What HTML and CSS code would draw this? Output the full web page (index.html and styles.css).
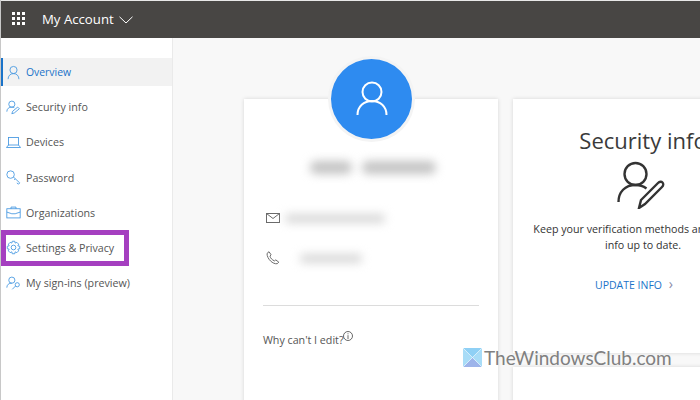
FILE: index.html
```html
<!DOCTYPE html>
<html lang="en">
<head>
  <meta charset="UTF-8">
  <title>My Account</title>
  <link rel="stylesheet" href="styles.css">
</head>
<body>

  <header class="topbar">
    <svg class="waffle" width="13" height="13" viewBox="0 0 13 13" fill="#fff">
      <rect x="0" y="0" width="3" height="3"/><rect x="5" y="0" width="3" height="3"/><rect x="10" y="0" width="3" height="3"/>
      <rect x="0" y="5" width="3" height="3"/><rect x="5" y="5" width="3" height="3"/><rect x="10" y="5" width="3" height="3"/>
      <rect x="0" y="10" width="3" height="3"/><rect x="5" y="10" width="3" height="3"/><rect x="10" y="10" width="3" height="3"/>
    </svg>
    <span class="brand">My Account</span>
    <svg class="chevron" width="14" height="8" viewBox="0 0 14 8" fill="none" stroke="#fff" stroke-width="1"><path d="M.5.8 7 7 13.500.8"/></svg>
  </header>

  <div class="layout">
    <nav class="sidebar">
      <a class="nav-item active">
        <svg class="nav-icon" viewBox="0 0 16 18"><circle cx="8" cy="6" r="4.300"/><path d="M1.500 17c0-4 2.700-6.700 6.500-6.700s6.500 2.700 6.500 6.700"/></svg>
        Overview
      </a>
      <a class="nav-item">
        <svg class="nav-icon" viewBox="0 0 18 18"><circle cx="7" cy="5" r="3.700"/><path d="M1 14c0-3.500 2.400-5.500 6-5.500 1 0 2 .2 3 .7"/><path d="m7 16.500 1-3 6-5 2 2-6 5z"/></svg>
        Security info
      </a>
      <a class="nav-item">
        <svg class="nav-icon" viewBox="0 0 18 16"><rect x="3" y="2" width="12" height="9"/><path d="M.5 14h17M3 11l-2.500 3M15 11l2.500 3"/></svg>
        Devices
      </a>
      <a class="nav-item">
        <svg class="nav-icon" viewBox="0 0 18 18"><circle cx="5.500" cy="5.500" r="4.500"/><path d="m9 8.500 7.500 7-1.500 1.500-2-1.500M11 10.500l-1 1.500"/></svg>
        Password
      </a>
      <a class="nav-item">
        <svg class="nav-icon" viewBox="0 0 18 16"><rect x="1" y="3.500" width="16" height="11"/><path d="M6 3.500V1.500h6v2M1 7.500l6 2h4l6-2"/></svg>
        Organizations
      </a>
      <a class="nav-item highlighted">
        <svg class="nav-icon" viewBox="0 0 18 18"><circle cx="9" cy="9" r="2.800"/><path d="m7.500 1.500h3l.5 2.200 2-.9 2.200 2.200-1 2 2.300.5v3l-2.300.5 1 2-2.200 2.200-2-1-.5 2.300h-3L7 14.200l-2 1-2.200-2.200 1-2-2.300-.5v-3l2.300-.5-1-2L5 2.800l2 .9z"/></svg>
        Settings &amp; Privacy
      </a>
      <a class="nav-item">
        <svg class="nav-icon" viewBox="0 0 18 18"><circle cx="7" cy="5" r="3.700"/><path d="M1 14c0-3.500 2.400-5.500 6-5.500"/><circle cx="13.500" cy="10.500" r="2.500"/><path d="m11.500 12-4 4"/></svg>
        My sign-ins (preview)
      </a>
    </nav>

    <main class="content">
      <section class="card profile-card">
        <div class="avatar">
          <svg width="32" height="36" viewBox="0 0 32 36" fill="none" stroke="#fff" stroke-width="2">
            <circle cx="16" cy="11" r="9.500"/>
            <path d="M1.500 34c0-8.500 6.300-14 14.500-14s14.500 5.500 14.500 14"/>
          </svg>
        </div>
        <div class="blur-name">
          <div class="blob first"></div>
          <div class="blob last"></div>
        </div>
        <div class="contact-row">
          <svg width="14" height="10" viewBox="0 0 14 10" fill="none" stroke="#6a6a6a"><rect x=".5" y=".5" width="13" height="9"/><path d="m.5.500 6.500 5 6.500-5"/></svg>
          <div class="blur-line mail"></div>
        </div>
        <div class="contact-row phone-row">
          <svg width="14" height="14" viewBox="0 0 14 14" fill="none" stroke="#6a6a6a"><path d="M1 2.500 3 .7l2 3-1 1.500c.5 2 2 3.700 4.500 4.700l1.300-1 3 2.300-1.600 1.500C7 13.500 1 8 1 2.500z"/></svg>
          <div class="blur-line phone"></div>
        </div>
        <hr class="divider">
        <div class="why-edit">
          Why can't I edit?
          <svg class="info-icon" width="10" height="10" viewBox="0 0 10 10" fill="none" stroke="#444" stroke-width=".8"><circle cx="5" cy="5" r="4.500"/><path d="M5 4.200V8M5 2.300v1"/></svg>
        </div>
      </section>

      <div class="right-column">
        <section class="card security-card">
          <h2>Security info</h2>
          <svg class="security-icon" width="48" height="48" viewBox="0 0 48 48" fill="none" stroke="#333" stroke-width="2.400">
            <circle cx="18.500" cy="13" r="11"/>
            <path d="M1.500 41c0-10 6.500-17 17-17 4.500 0 8 1.300 11 3.500"/>
            <path d="m22 47 2-8 17-17c1.500-1.500 3.500-1.500 4.500-.5s1 3-.5 4.500L28 43z"/>
          </svg>
          <p>Keep your verification methods and security<br>info up to date.</p>
          <a class="update-link">UPDATE INFO <span class="link-arrow">&#8250;</span></a>
        </section>
        <section class="card next-card"></section>
      </div>
    </main>
  </div>

  <div class="watermark">
    <svg width="19" height="19" viewBox="0 0 19 19">
      <rect width="19" height="19" fill="#8fd0f5"/>
      <path d="M0 19 9.500 9.500 19 19z" fill="#9db4ea"/>
      <path d="M0 0 9.500 9.500 0 19zM19 0 9.500 9.500 19 19z" fill="#a8dcf7"/>
      <path d="M0 0 19 19M19 0 0 19" stroke="#e6f4fc" stroke-width=".8"/>
    </svg>
    <span>TheWindowsClub.com</span>
  </div>

</body>
</html>
```

FILE: styles.css
```css
:root {
  --blue: #1a73c9;
  --text: #444;
}

* {
  box-sizing: border-box;
}

body {
  margin: 0;
  width: 700px;
  height: 400px;
  overflow: hidden;
  position: relative;
  font-family: 'Open Sans', 'Noto Sans', sans-serif;
  color: var(--text);
  background: #fff;
  border-left: 1px solid #c8c8c8;
}

.topbar {
  height: 38px;
  background: #484644;
  border-top: 1px solid #e8e8e8;
  display: flex;
  align-items: center;
  color: #fff;
}

.waffle {
  margin-left: 11px;
  margin-bottom: 2px;
}

.brand {
  margin-left: 17px;
  font-size: 13.2px;
  margin-bottom: 1px;
}

.chevron {
  margin-left: 5px;
}

.layout {
  display: flex;
  height: 362px;
}

.sidebar {
  width: 172px;
  flex-shrink: 0;
  padding-top: 20px;
  background: #fff;
  border-right: 1px solid #eaeaea;
}

.nav-item {
  height: 28px;
  margin-bottom: 7.2px;
  padding-left: 5px;
  display: flex;
  align-items: center;
  gap: 5px;
  font-size: 10.7px;
  color: #555;
  white-space: nowrap;
}

.nav-icon {
  width: 15px;
  height: 15px;
  fill: none;
  stroke: #3f94e0;
  stroke-width: 1;
  flex-shrink: 0;
}

.nav-item.active {
  background: #f2f2f2;
  color: var(--blue);
  border-left: 2px solid var(--blue);
  padding-left: 3px;
  font-size: 10.4px;
}

.nav-item.highlighted {
  width: 128px;
  height: 36px;
  margin-top: -4px;
  margin-bottom: 3.2px;
  border: 5px solid #a53fc0;
  padding-left: 0;
}

.content {
  flex: 1;
  background: #f8f8f8;
  padding: 61px 0 0 71px;
  display: flex;
  gap: 15px;
  min-width: 0;
  overflow: hidden;
}

.card {
  background: #fff;
  box-shadow: 0 0 4px rgba(0, 0, 0, 0.14);
}

.profile-card {
  width: 254px;
  height: 320px;
  flex-shrink: 0;
  padding: 0 19px;
  position: relative;
}

.avatar {
  position: absolute;
  left: 84px;
  top: -43px;
  width: 87px;
  height: 86px;
  border-radius: 50%;
  background: #2e8bf0;
  border: 3px solid #f4f4f4;
  display: flex;
  align-items: center;
  justify-content: center;
}

.blur-name {
  display: flex;
  gap: 10px;
  height: 13px;
  margin: 62px 0 0 47px;
}

.blob {
  height: 13px;
  background: #c4c4c4;
  border-radius: 6px;
  filter: blur(5px);
}

.blob.first {
  width: 42px;
}

.blob.last {
  width: 74px;
}

.contact-row {
  display: flex;
  align-items: center;
  gap: 5px;
  margin-top: 37px;
  padding-left: 3px;
  height: 14px;
}

.phone-row {
  margin-top: 26px;
}

.blur-line {
  height: 9px;
  background: #d8d8d8;
  border-radius: 4px;
  filter: blur(5px);
}

.blur-line.mail {
  width: 100px;
}

.blur-line.phone {
  width: 62px;
  margin-left: 15px;
}

.divider {
  border: 0;
  height: 1px;
  background: #dcdcdc;
  margin: 40px 0 0;
}

.why-edit {
  margin-top: 25px;
  font-size: 10.7px;
  color: #555;
}

.info-icon {
  vertical-align: 3px;
  margin-left: -3px;
}

.right-column {
  display: flex;
  flex-direction: column;
  gap: 14px;
  width: 260px;
  flex-shrink: 0;
}

.security-card {
  height: 254px;
  flex-shrink: 0;
  padding-top: 26px;
  text-align: center;
  width: 260px;
}

.security-card h2 {
  margin: 0;
  font-size: 22px;
  font-weight: 400;
  color: #3a3a3a;
  line-height: 30px;
}

.security-icon {
  display: block;
  margin: 6px auto 0 104px;
}

.security-card p {
  margin: 12px 0 0;
  font-size: 10.7px;
  line-height: 16px;
  color: #333;
  white-space: nowrap;
}

.update-link {
  display: block;
  margin-top: 25px;
  padding-right: 18px;
  font-size: 10.5px;
  color: var(--blue);
}

.link-arrow {
  margin-left: 4px;
  font-size: 14px;
  line-height: 10px;
  color: #8a8aa8;
}

.next-card {
  height: 60px;
  flex-shrink: 0;
}

.watermark {
  position: absolute;
  left: 462px;
  top: 348px;
  display: flex;
  align-items: center;
  gap: 2px;
  font-family: 'Lato', 'Open Sans', sans-serif;
  font-size: 19px;
  line-height: 19px;
  color: #808080;
}
```
